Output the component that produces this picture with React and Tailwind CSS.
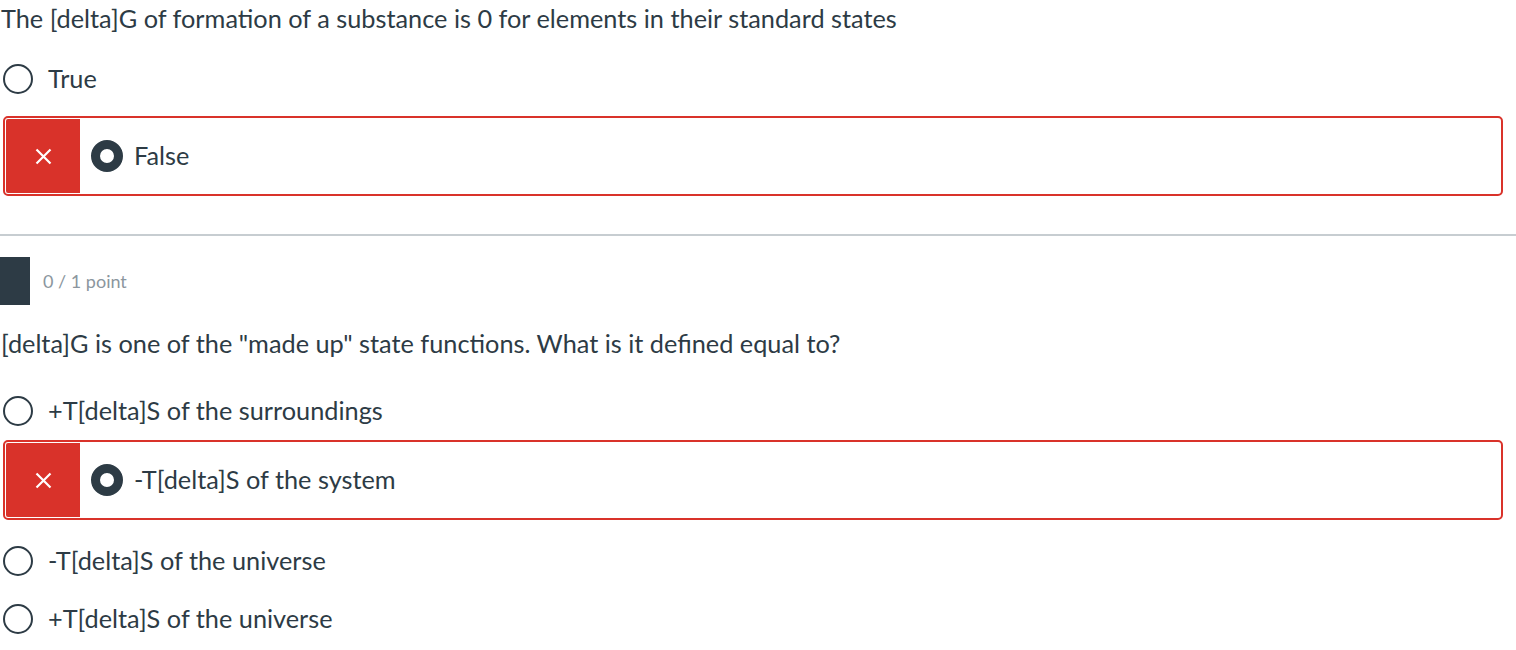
const Q1 = {
  text: 'The [delta]G of formation of a substance is 0 for elements in their standard states',
  answers: [
    { label: 'True' },
    { label: 'False', wrong: true },
  ],
};

const Q2 = {
  text: '[delta]G is one of the "made up" state functions. What is it defined equal to?',
  answers: [
    { label: '+T[delta]S of the surroundings' },
    { label: '-T[delta]S of the system', wrong: true },
    { label: '-T[delta]S of the universe' },
    { label: '+T[delta]S of the universe' },
  ],
};

function Radio({ checked }) {
  if (checked) {
    return <span className="block w-[32px] h-[32px] rounded-full border-[9px] border-[#2d3b45] bg-white shrink-0" />;
  }
  return <span className="block w-[30px] h-[30px] rounded-full border-2 border-[#2d3b45] bg-white shrink-0" />;
}

function Answer({ a }) {
  if (a.wrong) {
    return (
      <div className="flex items-stretch h-[80px] mr-[13px] ml-[3px] p-[1px] border-2 border-[#d9322a] rounded-[5px] overflow-hidden">
        <div className="w-[74px] bg-[#d9322a] rounded-l-[2px] flex items-center justify-center">
          <svg width="17" height="17" viewBox="0 0 17 17" fill="none" stroke="white" strokeWidth="2.2">
            <path d="M1.5 1.5 L15.5 15.5 M15.5 1.5 L1.5 15.5" />
          </svg>
        </div>
        <div className="flex items-center gap-[11px] pl-[11px]">
          <Radio checked />
          <span>{a.label}</span>
        </div>
      </div>
    );
  }
  return (
    <div className="flex items-center gap-[15px] pl-[3px] h-[30px]">
      <Radio />
      <span>{a.label}</span>
    </div>
  );
}

export default function App() {
  return (
    <div className="w-[1516px] h-[650px] bg-white text-[#2d3b45] text-[25.3px] overflow-hidden" style={{ fontFamily: 'Lato, "Open Sans", sans-serif' }}>
      <p className="pl-[1px] pt-[4px] leading-[28px]">{Q1.text}</p>
      <div className="mt-[32px]">
        <Answer a={Q1.answers[0]} />
      </div>
      <div className="mt-[22px]">
        <Answer a={Q1.answers[1]} />
      </div>

      <div className="mt-[38px] border-t-2 border-[#c7cdd1]" />

      <div className="mt-[21px] flex items-center gap-[13px]">
        <div className="w-[30px] h-[48px] bg-[#2d3b45]" />
        <span className="text-[18px] text-[#8b969e]">0 / 1 point</span>
      </div>

      <p className="pl-[1px] mt-[24px] leading-[28px]">{Q2.text}</p>

      <div className="mt-[39px]">
        <Answer a={Q2.answers[0]} />
      </div>
      <div className="mt-[14px]">
        <Answer a={Q2.answers[1]} />
      </div>
      <div className="mt-[26px]">
        <Answer a={Q2.answers[2]} />
      </div>
      <div className="mt-[28px]">
        <Answer a={Q2.answers[3]} />
      </div>
    </div>
  );
}
